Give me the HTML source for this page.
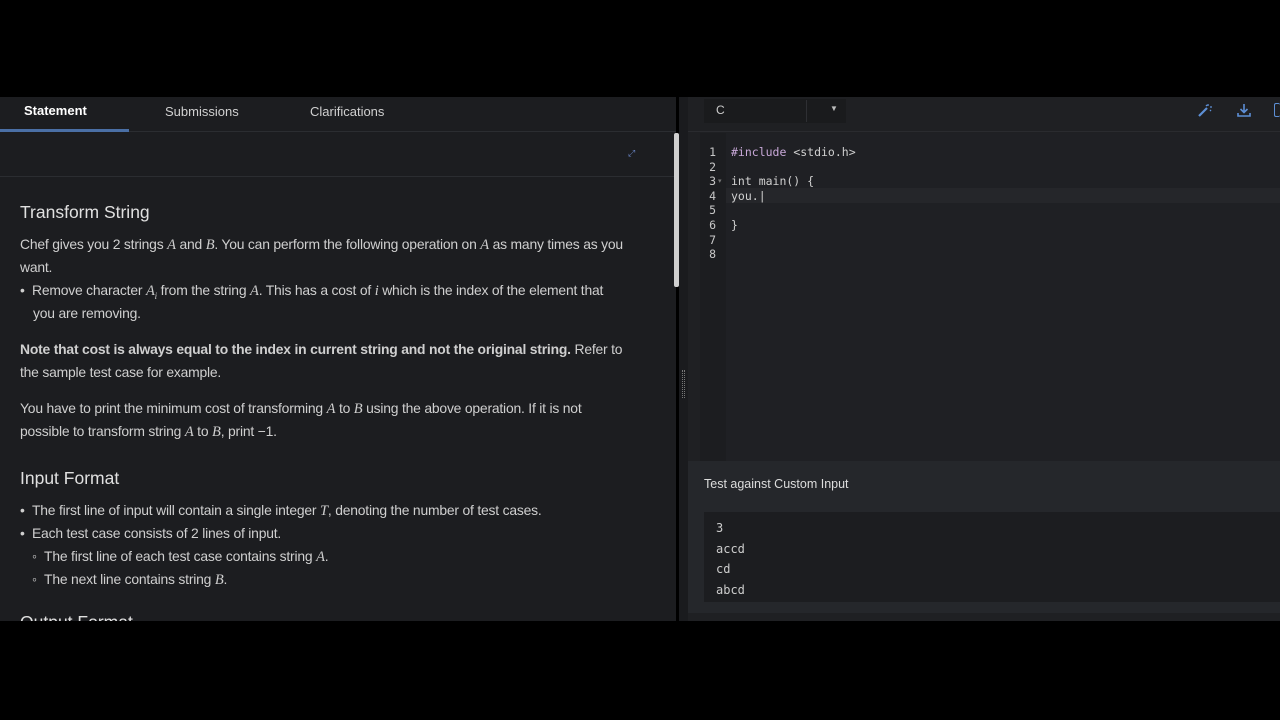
<!DOCTYPE html>
<html><head><style>
*{margin:0;padding:0;box-sizing:border-box}
body{width:1280px;height:720px;background:#000;position:relative;overflow:hidden;font-family:"Liberation Sans",sans-serif;color:#d6d6d6}
.abs{position:absolute}
.left{left:0;top:97px;width:676px;height:524px;background:#1c1d20;overflow:hidden}
.tabs{height:35px;border-bottom:1px solid #2b2d31;background:#1c1d20}
.tab{position:absolute;top:6px;font-size:13px;color:#d0d0d0}
.p{position:absolute;left:20px;font-size:13.9px;color:#cfcfcf;white-space:nowrap;letter-spacing:-0.2px}
.h{position:absolute;left:20px;font-size:17.5px;color:#e0e0e0}
i{font-family:"Liberation Serif",serif;font-size:14.5px}
.mono{font-family:"DejaVu Sans Mono","Liberation Mono",monospace;font-size:11.5px}
</style></head><body>
<div class="abs left">
 <div class="tabs"></div>
 <div class="tab" style="left:24px;font-weight:bold;color:#fff">Statement</div>
 <div class="tab" style="left:165px;top:7px">Submissions</div>
 <div class="tab" style="left:310px;top:7px">Clarifications</div>
 <div class="abs" style="left:0;top:32px;width:129px;height:3px;background:#4a6fa5"></div>
 <div class="abs" style="left:0;top:79px;width:676px;height:1px;background:#2b2d31"></div>
 <div class="abs" style="left:628px;top:51px;font-size:9px;color:#6b88c9">⤢</div>
 <div class="h" style="top:105px">Transform String</div>
 <div class="p" style="top:139px">Chef gives you 2 strings <i>A</i> and <i>B</i>. You can perform the following operation on <i>A</i> as many times as you</div>
 <div class="p" style="top:162px">want.</div>
 <div class="p" style="top:185px">•&nbsp;&nbsp;Remove character <i>A<sub style="font-size:9px">i</sub></i> from the string <i>A</i>. This has a cost of <i>i</i> which is the index of the element that</div>
 <div class="p" style="top:208px;left:33px">you are removing.</div>
 <div class="p" style="top:244px"><b>Note that cost is always equal to the index in current string and not the original string.</b> Refer to</div>
 <div class="p" style="top:267px">the sample test case for example.</div>
 <div class="p" style="top:303px">You have to print the minimum cost of transforming <i>A</i> to <i>B</i> using the above operation. If it is not</div>
 <div class="p" style="top:326px">possible to transform string <i>A</i> to <i>B</i>, print −1.</div>
 <div class="h" style="top:371px">Input Format</div>
 <div class="p" style="top:405px">•&nbsp;&nbsp;The first line of input will contain a single integer <i>T</i>, denoting the number of test cases.</div>
 <div class="p" style="top:428px">•&nbsp;&nbsp;Each test case consists of 2 lines of input.</div>
 <div class="p" style="top:451px;left:32px">◦&nbsp;&nbsp;The first line of each test case contains string <i>A</i>.</div>
 <div class="p" style="top:474px;left:32px">◦&nbsp;&nbsp;The next line contains string <i>B</i>.</div>
 <div class="h" style="top:515px">Output Format</div>
</div>
<div class="abs" style="left:674px;top:133px;width:5px;height:154px;background:#cfcfcf;border-radius:2px"></div>
<div class="abs" style="left:679px;top:97px;width:9px;height:524px;background:#1a1b1e"></div>
<div class="abs" style="left:682px;top:370px;width:3px;height:28px;border-left:1px dotted #777;border-right:1px dotted #777"></div>
<!-- right -->
<div class="abs" style="left:688px;top:97px;width:592px;height:524px;background:#1f2023"></div>
<div class="abs" style="left:704px;top:99px;width:142px;height:24px;background:#1a1b1d"></div>
<div class="abs" style="left:716px;top:103px;font-size:12px;color:#ccc">C</div>
<div class="abs" style="left:806px;top:100px;width:1px;height:22px;background:#2e2f33"></div>
<div class="abs" style="left:830px;top:104px;font-size:8px;color:#bbb">▼</div>
<svg class="abs" style="left:1197px;top:102px" width="16" height="16" viewBox="0 0 16 16"><path d="M2 14L10 6" stroke="#5d8fd6" stroke-width="2.2"/><path d="M11 2v2M13 5h2M9 3l1 1M13 8l1 1" stroke="#5d8fd6" stroke-width="1.3"/></svg>
<svg class="abs" style="left:1236px;top:102px" width="16" height="16" viewBox="0 0 16 16"><path d="M8 2v8M4.5 7L8 10.5 11.5 7M2 11v3h12v-3" stroke="#5d8fd6" stroke-width="1.6" fill="none"/></svg>
<div class="abs" style="left:1274px;top:103px;width:6px;height:14px;border:1.5px solid #5d8fd6;border-right:none;border-radius:2px"></div>
<div class="abs" style="left:688px;top:131px;width:592px;height:1px;background:#2a2b2f"></div>
<div class="abs" style="left:700px;top:133px;width:26px;height:328px;background:#1c1d20"></div>
<div class="abs" style="left:726px;top:133px;width:554px;height:328px;background:#1f2024"></div>
<div class="abs" style="left:726px;top:188px;width:554px;height:15px;background:#25262a"></div>
<div class="abs mono" style="left:706px;top:145px;line-height:14.6px;color:#c8c8c8;text-align:right;width:10px">1<br>2<br>3<br>4<br>5<br>6<br>7<br>8</div>
<div class="abs" style="left:718px;top:177px;font-size:7px;color:#777">▾</div>
<div class="abs mono" style="left:731px;top:145px;line-height:14.6px;color:#d0d0d0;white-space:pre"><span style="color:#c8a8d8">#include</span> &lt;stdio.h&gt;

int main() {
you.|

}</div>
<div class="abs" style="left:688px;top:461px;width:592px;height:160px;background:#25272b"></div>
<div class="abs" style="left:704px;top:477px;font-size:12.5px;color:#ddd">Test against Custom Input</div>
<div class="abs" style="left:704px;top:512px;width:576px;height:90px;background:#1c1d20"></div>
<div class="abs mono" style="left:716px;top:518px;line-height:20.5px;color:#ccc;font-size:12px">3<br>accd<br>cd<br>abcd</div>
<div class="abs" style="left:688px;top:613px;width:592px;height:8px;background:#1f2023"></div>
</body></html>
